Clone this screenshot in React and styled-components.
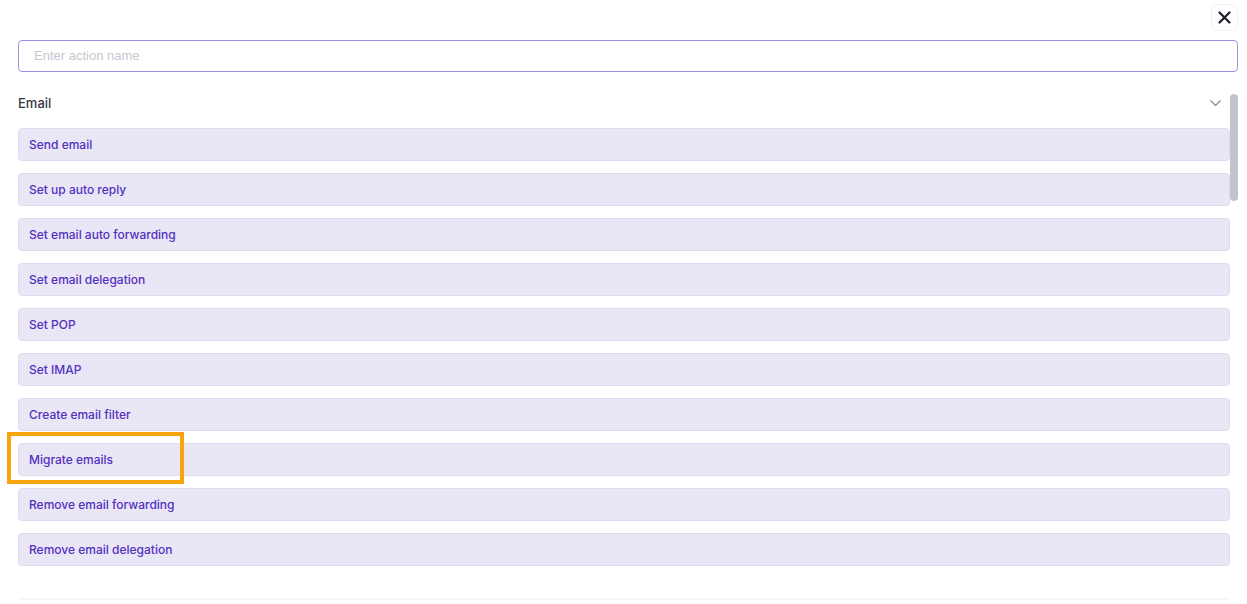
import React from 'react';
import styled, { createGlobalStyle } from 'styled-components';

const GlobalStyle = createGlobalStyle`
  html, body {
    margin: 0;
    padding: 0;
    background: #ffffff;
    font-family: 'Inter', 'Liberation Sans', sans-serif;
  }
  * { box-sizing: border-box; }
`;

const Panel = styled.div`
  display: flex;
  flex-direction: column;
  height: 604px;
  padding: 4px 9px 0 0;
  overflow: hidden;
`;

const TopBar = styled.div`
  display: flex;
  justify-content: flex-end;
  height: 27px;
  margin-bottom: 9px;
`;

const CloseButton = styled.button`
  display: flex;
  align-items: center;
  justify-content: center;
  width: 27px;
  height: 27px;
  padding: 0;
  background: #ffffff;
  border: 1px solid #f1f1f4;
  border-radius: 7px;
  color: #1d1d2b;
  cursor: pointer;
`;

const SearchInput = styled.input`
  width: 1220px;
  height: 32px;
  margin-left: 18px;
  padding: 0 15px 2px;
  border: 1px solid #a28be0;
  border-radius: 4px;
  outline: none;
  font-family: 'Liberation Sans', Arial, sans-serif;
  font-size: 13px;
  color: #333;

  &::placeholder {
    color: #c7c6d0;
  }
`;

const Body = styled.div`
  flex: 1;
  display: flex;
  margin-top: 22px;
  min-height: 0;
`;

const List = styled.div`
  flex: 1;
  padding-left: 18px;
  overflow: hidden;
`;

const ScrollTrack = styled.div`
  width: 8px;
  flex-shrink: 0;
`;

const ScrollThumb = styled.div`
  height: 107px;
  background: #c1c5cb;
  border-radius: 4px;
`;

const Group = styled.section`
  padding-bottom: 32px;
  border-bottom: 2px solid #f6f6f9;
`;

const GroupHeader = styled.div`
  display: flex;
  align-items: center;
  justify-content: space-between;
  height: 18px;
  margin-bottom: 16px;
  padding-right: 9px;
  font-size: 13px;
  font-weight: 500;
  color: #37373d;
`;

const ItemList = styled.div`
  display: flex;
  flex-direction: column;
  gap: 12px;
`;

const Item = styled.div`
  position: relative;
  display: flex;
  align-items: center;
  height: 33px;
  padding-left: 10px;
  background: #e9e6f6;
  border: 1px solid #dfdaf0;
  border-radius: 4px;
  font-size: 12px;
  font-weight: 500;
  color: #5330bf;
  cursor: pointer;
`;

const Highlight = styled.span`
  position: absolute;
  left: -12px;
  top: -12px;
  width: 177px;
  height: 52px;
  border: 4px solid #f6a50b;
  pointer-events: none;
`;

const emailActions = [
  'Send email',
  'Set up auto reply',
  'Set email auto forwarding',
  'Set email delegation',
  'Set POP',
  'Set IMAP',
  'Create email filter',
  'Migrate emails',
  'Remove email forwarding',
  'Remove email delegation',
];

const CloseIcon = () => (
  <svg width="13" height="13" viewBox="0 0 13 13" fill="none">
    <path d="M1.5 1.5L11.5 11.5M11.5 1.5L1.5 11.5" stroke="currentColor" strokeWidth="2.2" strokeLinecap="round" />
  </svg>
);

const ChevronDown = () => (
  <svg width="11" height="7" viewBox="0 0 11 7" fill="none">
    <path d="M0.75 0.75L5.5 5.5L10.25 0.75" stroke="#8a8a93" strokeWidth="1.1" strokeLinecap="round" strokeLinejoin="round" />
  </svg>
);

export default function App() {
  return (
    <>
      <GlobalStyle />
      <Panel>
        <TopBar>
          <CloseButton aria-label="Close">
            <CloseIcon />
          </CloseButton>
        </TopBar>
        <SearchInput placeholder="Enter action name" autoFocus />
        <Body>
          <List>
            <Group>
              <GroupHeader>
                <span>Email</span>
                <ChevronDown />
              </GroupHeader>
              <ItemList>
                {emailActions.map((item) => (
                  <Item key={item}>
                    {item}
                    {item === 'Migrate emails' && <Highlight />}
                  </Item>
                ))}
              </ItemList>
            </Group>
          </List>
          <ScrollTrack>
            <ScrollThumb />
          </ScrollTrack>
        </Body>
      </Panel>
    </>
  );
}
